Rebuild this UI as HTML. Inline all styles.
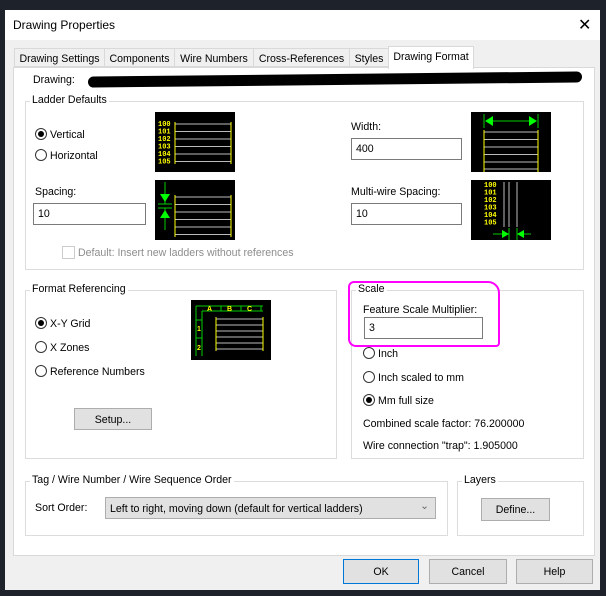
<!DOCTYPE html>
<html><head><style>
body{margin:0;width:606px;height:596px;background:#1e232b;position:relative;overflow:hidden;font-family:"Liberation Sans",sans-serif;font-size:10.6px;color:#000;white-space:nowrap;}
.a{position:absolute;}
.grp{position:absolute;border:1px solid #dcdcdc;}
.gl{position:absolute;background:#fff;padding:0 2px;top:-8px;left:4px;color:#000;}
.inp{position:absolute;background:#fff;border:1px solid #7a7a7a;height:20px;box-sizing:border-box;padding:4px 4px;}
.btn{position:absolute;background:#e1e1e1;border:1px solid #adadad;box-sizing:border-box;text-align:center;}
.rad{position:absolute;width:12px;height:12px;border:1px solid #333;border-radius:50%;box-sizing:border-box;background:#fff;}
.rad.on::after{content:"";position:absolute;left:2px;top:2px;width:6px;height:6px;border-radius:50%;background:#000;}
.tab{position:absolute;top:48px;height:19px;border:1px solid #d9d9d9;background:#f0f0f0;box-sizing:border-box;padding:4px 0 0 0;text-align:center;font-size:10.6px;}
</style></head><body>
<div class="a" style="left:5px;top:10px;width:595px;height:580px;background:#f0f0f0;"></div>
<div class="a" style="left:5px;top:10px;width:595px;height:30px;background:#fff;"></div>
<div class="a" style="left:13px;top:18px;font-size:12px;">Drawing Properties</div>
<div class="a" style="left:578px;top:15px;font-size:16px;font-weight:300;">✕</div>
<div class="a" style="left:13px;top:67px;width:580px;height:487px;background:#fff;border:1px solid #d9d9d9;"></div>
<div class="tab" style="left:14px;width:91px;">Drawing Settings</div>
<div class="tab" style="left:104px;width:71px;">Components</div>
<div class="tab" style="left:174px;width:80px;">Wire Numbers</div>
<div class="tab" style="left:253px;width:97px;">Cross-References</div>
<div class="tab" style="left:349px;width:40px;">Styles</div>
<div class="tab" style="left:388px;top:46px;width:86px;height:23px;background:#fff;border-bottom:none;padding-top:4px;">Drawing Format</div>
<div class="a" style="left:33px;top:74px;">Drawing:</div>
<div class="a" style="left:88px;top:74px;width:494px;height:11px;background:#000;border-radius:6px;transform:skewY(-0.6deg);"></div>

<div class="grp" style="left:25px;top:101px;width:557px;height:167px;"><span class="gl">Ladder Defaults</span></div>
<div class="rad on" style="left:35px;top:128px;"></div><div class="a" style="left:50px;top:129px;">Vertical</div>
<div class="rad" style="left:35px;top:149px;"></div><div class="a" style="left:50px;top:150px;">Horizontal</div>
<div class="a" style="left:35px;top:186px;">Spacing:</div>
<div class="inp" style="left:33px;top:203px;width:113px;height:22px;">10</div>
<div class="a" style="left:351px;top:121px;">Width:</div>
<div class="inp" style="left:351px;top:138px;width:111px;height:22px;">400</div>
<div class="a" style="left:351px;top:186px;">Multi-wire Spacing:</div>
<div class="inp" style="left:351px;top:203px;width:111px;height:22px;">10</div>
<div class="a" style="left:62px;top:246px;width:11px;height:11px;border:1px solid #ccc;"></div>
<div class="a" style="left:78px;top:247px;color:#8d8d8d;">Default: Insert new ladders without references</div>

<svg class="a" style="left:155px;top:112px" width="80" height="60"><rect width="80" height="60" fill="#000"/><g fill="#ff0" font-size="7" font-family="Liberation Mono" font-weight="bold"><text x="3" y="14">100</text><text x="3" y="21.5">101</text><text x="3" y="29">102</text><text x="3" y="36.5">103</text><text x="3" y="44">104</text><text x="3" y="51.5">105</text></g><g stroke="#bbb"><path d="M20 12H76M20 19.5H76M20 27H76M20 34.5H76M20 42H76M20 49.5H76"/></g><path d="M20 10V52M76 10V52" stroke="#ff0"/></svg>
<svg class="a" style="left:155px;top:180px" width="80" height="60"><rect width="80" height="60" fill="#000"/><g stroke="#bbb"><path d="M20 17H76M20 24.5H76M20 32H76M20 39.5H76M20 47H76M20 54.5H76"/></g><path d="M20 15V57M76 15V57" stroke="#ff0"/><path d="M10 2V24M3 24H17M3 28H17M10 28V50" stroke="#0c0"/><path d="M5 14L10 22L15 14ZM5 38L10 30L15 38Z" fill="#0f0"/></svg>
<svg class="a" style="left:471px;top:112px" width="80" height="60"><rect width="80" height="60" fill="#000"/><g stroke="#bbb"><path d="M13 20H67M13 27.5H67M13 35H67M13 42.5H67M13 50H67M13 57H67"/></g><path d="M13 18V60M67 18V60" stroke="#ff0"/><path d="M13 2V16M67 2V16M15 9H65" stroke="#0c0"/><path d="M14 9L22 4V14ZM66 9L58 4V14Z" fill="#0f0"/></svg>
<svg class="a" style="left:471px;top:180px" width="80" height="60"><rect width="80" height="60" fill="#000"/><g fill="#ff0" font-size="7" font-family="Liberation Mono" font-weight="bold"><text x="13" y="7">100</text><text x="13" y="14.5">101</text><text x="13" y="22">102</text><text x="13" y="29.5">103</text><text x="13" y="37">104</text><text x="13" y="44.5">105</text></g><path d="M33 2V47M38 2V47M46 2V47" stroke="#bbb"/><path d="M22 54H38M46 54H60M38 48V60M46 48V60" stroke="#0c0"/><path d="M38 54L31 50V58ZM46 54L53 50V58Z" fill="#0f0"/></svg>

<div class="grp" style="left:25px;top:290px;width:310px;height:167px;"><span class="gl">Format Referencing</span></div>
<div class="rad on" style="left:35px;top:317px;"></div><div class="a" style="left:50px;top:318px;">X-Y Grid</div>
<div class="rad" style="left:35px;top:341px;"></div><div class="a" style="left:50px;top:342px;">X Zones</div>
<div class="rad" style="left:35px;top:365px;"></div><div class="a" style="left:50px;top:366px;">Reference Numbers</div>
<div class="btn" style="left:74px;top:408px;width:78px;height:22px;padding-top:5px;">Setup...</div>
<svg class="a" style="left:191px;top:300px" width="80" height="60"><rect width="80" height="60" fill="#000"/><path d="M5 6H72M11 11H72M5 6V56M11 11V56M5 20H11M5 38H11M30 6V11M50 6V11M70 6V11" stroke="#0c0"/><g fill="#ff0" font-size="7" font-weight="bold"><text x="16" y="11">A</text><text x="36" y="11">B</text><text x="56" y="11">C</text><text x="6" y="31">1</text><text x="6" y="50">2</text></g><g stroke="#bbb"><path d="M25 19H72M25 25H72M25 31H72M25 37H72M25 43H72M25 49H72"/></g><path d="M25 17V51M72 17V51" stroke="#ff0"/></svg>

<div class="grp" style="left:351px;top:290px;width:231px;height:167px;"><span class="gl">Scale</span></div>
<div class="a" style="left:363px;top:304px;">Feature Scale Multiplier:</div>
<div class="inp" style="left:364px;top:317px;width:119px;height:22px;">3</div>
<div class="a" style="left:348px;top:281px;width:152px;height:66px;border:2px solid #f0f;border-radius:6px 12px 4px 8px;box-sizing:border-box;"></div>
<div class="rad" style="left:363px;top:347px;"></div><div class="a" style="left:378px;top:348px;">Inch</div>
<div class="rad" style="left:363px;top:371px;"></div><div class="a" style="left:378px;top:372px;">Inch scaled to mm</div>
<div class="rad on" style="left:363px;top:394px;"></div><div class="a" style="left:378px;top:395px;">Mm full size</div>
<div class="a" style="left:363px;top:418px;">Combined scale factor: 76.200000</div>
<div class="a" style="left:363px;top:440px;">Wire connection "trap": 1.905000</div>

<div class="grp" style="left:25px;top:481px;width:421px;height:53px;"><span class="gl">Tag / Wire Number / Wire Sequence Order</span></div>
<div class="a" style="left:35px;top:502px;">Sort Order:</div>
<div class="btn" style="left:105px;top:497px;width:331px;height:22px;text-align:left;padding:5px 4px;">Left to right, moving down (default for vertical ladders)<span style="position:absolute;right:6px;top:2px;color:#666;">⌄</span></div>
<div class="grp" style="left:457px;top:481px;width:125px;height:53px;"><span class="gl">Layers</span></div>
<div class="btn" style="left:481px;top:498px;width:69px;height:23px;padding-top:5px;">Define...</div>

<div class="btn" style="left:343px;top:559px;width:76px;height:25px;padding-top:6px;border:1px solid #0078d7;">OK</div>
<div class="btn" style="left:429px;top:559px;width:78px;height:25px;padding-top:6px;">Cancel</div>
<div class="btn" style="left:516px;top:559px;width:77px;height:25px;padding-top:6px;">Help</div>
</body></html>
